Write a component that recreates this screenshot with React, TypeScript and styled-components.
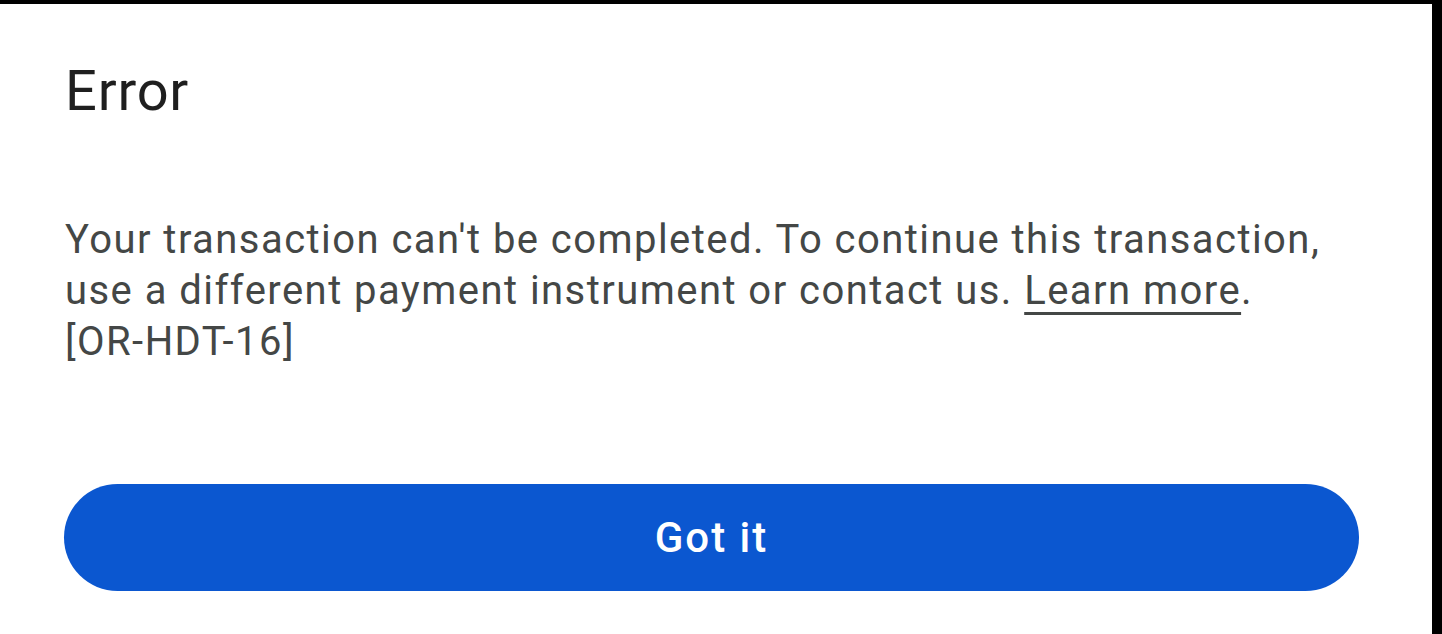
import React from "react";
import styled, { createGlobalStyle } from "styled-components";

const GlobalStyle = createGlobalStyle`
  html, body {
    margin: 0;
    padding: 0;
    background: #000;
  }
  body {
    font-family: Roboto, "Liberation Sans", Arial, sans-serif;
    -webkit-font-smoothing: antialiased;
  }
`;

const Frame = styled.div`
  width: 1442px;
  height: 634px;
  box-sizing: border-box;
  border-top: 4px solid #000;
  border-right: 10px solid #000;
  background: #000;
  overflow: hidden;
`;

const Dialog = styled.div`
  height: 100%;
  box-sizing: border-box;
  background: #fff;
  padding: 55px 73px 0 64px;
  display: flex;
  flex-direction: column;
`;

const Title = styled.h1`
  margin: 0 0 0 1px;
  font-size: 56px;
  line-height: 64px;
  font-weight: 400;
  letter-spacing: 0.8px;
  color: #1f1f1f;
`;

const Message = styled.p`
  margin: 91px 0 0 1px;
  font-size: 40px;
  line-height: 51px;
  font-weight: 400;
  letter-spacing: 1.45px;
  color: #444746;
  white-space: nowrap;
`;

const Link = styled.a`
  color: inherit;
  text-decoration: underline;
  text-decoration-thickness: 3px;
  text-underline-offset: 8px;
`;

const Button = styled.button`
  margin-top: 117px;
  height: 107px;
  width: 100%;
  border: none;
  border-radius: 54px;
  background: #0b57d0;
  color: #fff;
  font-family: Roboto, "Liberation Sans", Arial, sans-serif;
  font-size: 42px;
  font-weight: 500;
  letter-spacing: 2px;
  cursor: pointer;
`;

export default function App() {
  return (
    <>
      <GlobalStyle />
      <Frame>
        <Dialog>
          <Title>Error</Title>
          <Message>
            Your transaction can't be completed. To continue this transaction,
            <br />
            use a different payment instrument or contact us.{" "}
            <Link href="#">Learn more</Link>.
            <br />
            [OR-HDT-16]
          </Message>
          <Button>Got it</Button>
        </Dialog>
      </Frame>
    </>
  );
}
